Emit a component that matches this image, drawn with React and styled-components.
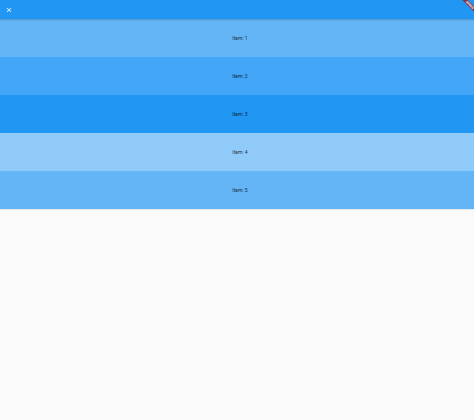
import React from 'react'
import styled, { createGlobalStyle } from 'styled-components'

const GlobalStyle = createGlobalStyle`
    html, body {
        margin: 0;
        padding: 0;
        height: 100%;
        background: #fafafa;
        font-family: Roboto, "Liberation Sans", sans-serif;
    }
    #root {
        min-height: 100%;
    }
`

const Page = styled.div`
    position: relative;
    min-height: 420px;
    background: #fafafa;
    overflow: hidden;
`

const AppBar = styled.header`
    display: flex;
    align-items: center;
    height: 19px;
    padding-left: 5px;
    background: #2196f3;
    box-shadow: 0 1px 1.5px rgba(0, 0, 0, 0.2);
    position: relative;
    z-index: 1;
`

const CloseButton = styled.button`
    display: flex;
    align-items: center;
    justify-content: center;
    width: 8px;
    height: 8px;
    padding: 0;
    border: none;
    background: none;
    color: #fff;
`

const List = styled.div`
    display: flex;
    flex-direction: column;
    box-shadow: 0 1px 1px rgba(0, 0, 0, 0.06);
`

const Item = styled.div`
    display: flex;
    align-items: center;
    justify-content: center;
    height: 38px;
    padding-left: 6px;
    background: ${props => props.shade};
    color: rgba(0, 0, 0, 0.8);
    font-size: 5px;
`

const BannerCorner = styled.div`
    position: absolute;
    top: 0;
    right: 0;
    width: 20px;
    height: 20px;
    overflow: hidden;
    z-index: 2;
    pointer-events: none;
`

const Ribbon = styled.div`
    position: absolute;
    left: 0.5px;
    top: 2.5px;
    width: 30px;
    height: 4px;
    background: rgba(160, 28, 28, 0.75);
    transform: rotate(45deg);
    display: flex;
    align-items: center;
    justify-content: center;
    color: #fff;
    font-size: 3px;
    font-weight: 700;
    letter-spacing: 0.1px;
`

const items = [
    { label: 'Item: 1', shade: '#64b5f6' },
    { label: 'Item: 2', shade: '#42a5f5' },
    { label: 'Item: 3', shade: '#2196f3' },
    { label: 'Item: 4', shade: '#90caf9' },
    { label: 'Item: 5', shade: '#64b5f6' },
]

const App = () => {
    return(
        <Page>
            <GlobalStyle />
            <AppBar>
                <CloseButton aria-label="close">
                    <svg width="8" height="8" viewBox="0 0 24 24" fill="currentColor">
                        <path d="M19 6.41L17.59 5 12 10.59 6.41 5 5 6.41 10.59 12 5 17.59 6.41 19 12 13.41 17.59 19 19 17.59 13.41 12z" />
                    </svg>
                </CloseButton>
            </AppBar>
            <List>
                {
                    items.map(item => (
                        <Item key={item.label} shade={item.shade}>{ item.label }</Item>
                    ))
                }
            </List>
            <BannerCorner>
                <Ribbon>DEBUG</Ribbon>
            </BannerCorner>
        </Page>
    )
}

export default App
